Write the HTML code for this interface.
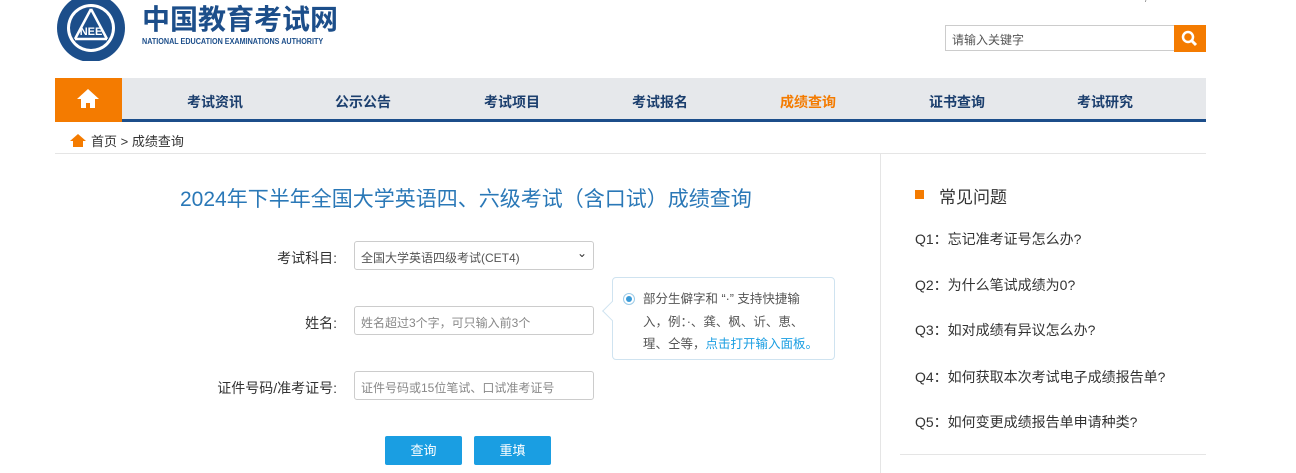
<!DOCTYPE html>
<html><head><meta charset="utf-8"><style>
*{margin:0;padding:0;box-sizing:border-box}
body{width:1296px;height:473px;overflow:hidden;background:#fff;font-family:"Liberation Sans","Noto Sans CJK SC",sans-serif;position:relative;color:#333}
.abs{position:absolute}
.nav{left:55px;top:78px;width:1151px;height:44px;background:#e6e8eb;border-bottom:3px solid #1c4e8a}
.nav span{position:absolute;top:14px;font-size:14px;font-weight:bold;color:#1c3f6e}
.lbl{font-size:14px;color:#333;text-align:right;width:200px}
.inp{border:1px solid #ccc;border-radius:3px;height:29px;font-size:12px;color:#888;padding:7px 6px;background:#fff}
.q{left:915px;font-size:14px;color:#333}
.btn{top:436px;width:77px;height:29px;background:#1a9ee2;color:#fff;font-size:13px;text-align:center;line-height:29px;border-radius:2px}
</style></head><body>
<svg class="abs" style="left:55px;top:-5px" width="72" height="66" viewBox="0 0 72 66">
<circle cx="36" cy="33" r="34" fill="#1c4e8a"/><circle cx="36" cy="33" r="24" fill="#fff"/><circle cx="36" cy="33" r="21" fill="#1c4e8a"/>
<path d="M36 14 L20 44 M36 14 L52 44 M20 44 H52" stroke="#fff" stroke-width="2.5" fill="none"/>
<text x="36" y="40" font-size="11" fill="#fff" text-anchor="middle" font-family="Liberation Sans" font-weight="bold">NEE</text></svg>
<div class="abs" style="left:142px;top:2px;font-size:28px;font-weight:bold;color:#1c4e8a;letter-spacing:0px;line-height:36px">中国教育考试网</div>
<div class="abs" style="left:142px;top:37px;font-size:8px;font-weight:bold;color:#1c4e8a;transform:scaleX(0.9);transform-origin:0 0;white-space:nowrap">NATIONAL EDUCATION EXAMINATIONS AUTHORITY</div>
<div class="abs" style="left:1145px;top:-6px;font-size:10px;color:#888">/</div>
<div class="abs inp" style="left:945px;top:25px;width:230px;height:26px;border-radius:0;padding:5px 6px;color:#555">请输入关键字</div>
<div class="abs" style="left:1174px;top:25px;width:32px;height:27px;background:#f47b00"><svg width="32" height="27"><circle cx="14" cy="12" r="5" stroke="#fff" stroke-width="2.5" fill="none"/><path d="M18 16 L22 20" stroke="#fff" stroke-width="3"/></svg></div>
<div class="abs nav">
<div class="abs" style="left:0;top:0;width:67px;height:44px;background:#f47b00"><svg width="67" height="44"><path d="M33 11 L22 21 H26 V30 H31 V25 H35 V30 H40 V21 H44 Z" fill="#fff"/></svg></div>
<span style="left:132px">考试资讯</span><span style="left:280px">公示公告</span><span style="left:429px">考试项目</span><span style="left:577px">考试报名</span><span style="left:725px;color:#f47b00">成绩查询</span><span style="left:874px">证书查询</span><span style="left:1022px">考试研究</span>
</div>
<svg class="abs" style="left:70px;top:133px" width="16" height="14"><path d="M8 1 L0 8 H3 V14 H13 V8 H16 Z" fill="#f47b00"/></svg>
<div class="abs" style="left:91px;top:131px;font-size:13px">首页 &gt; 成绩查询</div>
<div class="abs" style="left:55px;top:153px;width:1151px;height:1px;background:#e5e5e5"></div>
<div class="abs" style="left:880px;top:153px;width:1px;height:320px;background:#e5e5e5"></div>
<div class="abs" style="left:180px;top:183px;font-size:21px;color:#2a78b7;white-space:nowrap">2024年下半年全国大学英语四、六级考试（含口试）成绩查询</div>
<div class="abs lbl" style="left:137px;top:248px">考试科目:</div>
<div class="abs inp" style="left:354px;top:241px;width:240px;color:#555">全国大学英语四级考试(CET4)<span style="position:absolute;right:6px;top:4px;font-size:12px;color:#333">⌄</span></div>
<div class="abs lbl" style="left:137px;top:313px">姓名:</div>
<div class="abs inp" style="left:354px;top:306px;width:240px">姓名超过3个字，可只输入前3个</div>
<div class="abs lbl" style="left:137px;top:378px">证件号码/准考证号:</div>
<div class="abs inp" style="left:354px;top:371px;width:240px">证件号码或15位笔试、口试准考证号</div>
<div class="abs" style="left:612px;top:277px;width:223px;height:83px;border:1px solid #cfe3f0;border-radius:4px;background:#fff;padding:10px 0 0 30px;font-size:12.5px;line-height:22.5px;color:#555;white-space:nowrap">
<span style="position:absolute;left:10px;top:15px;width:12px;height:12px;border-radius:50%;border:1px solid #9ccbe8;background:#fff"><span style="position:absolute;left:2px;top:2px;width:6px;height:6px;border-radius:50%;background:#3a9bd8"></span></span>
部分生僻字和 “·” 支持快捷输<br>入，例：·、龚、枫、䜣、恵、<br>瑆、仝等，<span style="color:#1a9ee2">点击打开输入面板。</span>
<span style="position:absolute;left:-8px;top:26px;width:14px;height:14px;background:#fff;border-left:1px solid #cfe3f0;border-bottom:1px solid #cfe3f0;transform:rotate(45deg)"></span></div>
<div class="abs btn" style="left:385px">查询</div>
<div class="abs btn" style="left:474px">重填</div>
<div class="abs" style="left:915px;top:190px;width:9px;height:9px;background:#f47b00"></div>
<div class="abs" style="left:939px;top:183px;font-size:17px;color:#333">常见问题</div>
<div class="abs q" style="top:229px">Q1：忘记准考证号怎么办?</div>
<div class="abs q" style="top:275px">Q2：为什么笔试成绩为0?</div>
<div class="abs q" style="top:320px">Q3：如对成绩有异议怎么办?</div>
<div class="abs q" style="top:367px">Q4：如何获取本次考试电子成绩报告单?</div>
<div class="abs q" style="top:412px">Q5：如何变更成绩报告单申请种类?</div>
<div class="abs" style="left:900px;top:454px;width:306px;height:1px;background:#e5e5e5"></div>
</body></html>
